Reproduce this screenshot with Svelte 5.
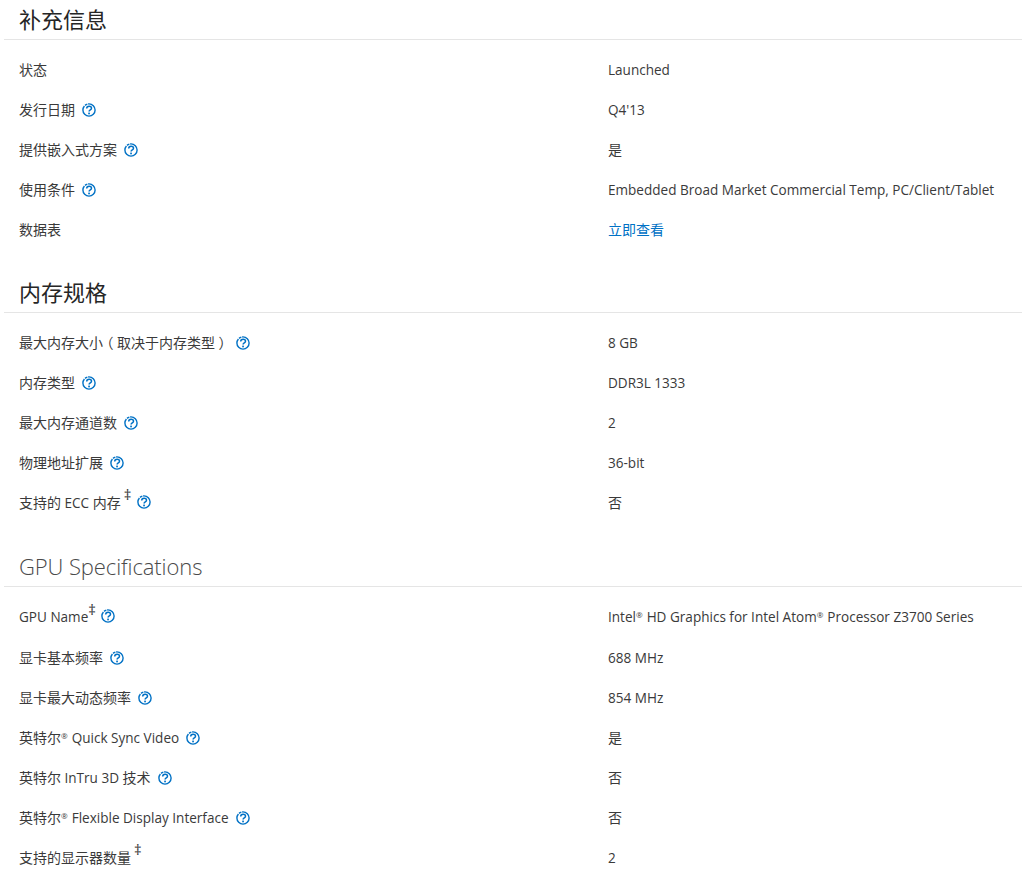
<script>
  const sections = [
    {
      title: '补充信息',
      rows: [
        { label: '状态', value: 'Launched' },
        { label: '发行日期', help: true, value: "Q4'13" },
        { label: '提供嵌入式方案', help: true, value: '是' },
        { label: '使用条件', help: true, value: 'Embedded Broad Market Commercial Temp, PC/Client/Tablet' },
        { label: '数据表', value: '立即查看', link: true }
      ]
    },
    {
      title: '内存规格',
      rows: [
        { label: '最大内存大小（取决于内存类型）', help: true, value: '8 GB' },
        { label: '内存类型', help: true, value: 'DDR3L 1333' },
        { label: '最大内存通道数', help: true, value: '2' },
        { label: '物理地址扩展', help: true, value: '36-bit' },
        { label: '支持的 ECC 内存', dagger: 'spaced', help: true, value: '否' }
      ]
    },
    {
      title: 'GPU Specifications',
      latin: true,
      rows: [
        { label: 'GPU Name', dagger: 'tight', help: true, value: 'Intel® HD Graphics for Intel Atom® Processor Z3700 Series' },
        { label: '显卡基本频率', help: true, value: '688 MHz' },
        { label: '显卡最大动态频率', help: true, value: '854 MHz' },
        { label: '英特尔® Quick Sync Video', help: true, value: '是' },
        { label: '英特尔 InTru 3D 技术', help: true, value: '否' },
        { label: '英特尔® Flexible Display Interface', help: true, value: '否' },
        { label: '支持的显示器数量', dagger: 'spaced', value: '2' }
      ]
    }
  ];

  // latin runs sit a bit smaller than the CJK ones, ® is a tiny raised mark
  function runs(text) {
    return text.split(/(®|[（）]|[\x20-\x7e]+)/).filter(Boolean).map((t) => ({
      t,
      cls: t === '®' ? 'reg' : /[（）]/.test(t) ? 'paren' : /^[\x20-\x7e]+$/.test(t) ? 'lat' : 'cjk'
    }));
  }
</script>

{#snippet text(str)}
  {#each runs(str) as r}<span class={r.cls}>{r.t}</span>{/each}
{/snippet}

<div class="page">
  {#each sections as section}
    <section>
      <h2 class:latin={section.latin}>{section.title}</h2>
      {#each section.rows as row}
        <div class="row" class:tall={row.dagger}>
          <div class="label">
            <span class="txt">{@render text(row.label)}</span>
            {#if row.dagger}
              <sup class={row.dagger}>‡</sup>
            {/if}
            {#if row.help}
              <svg class="help" viewBox="0 0 14 14" width="14" height="14" aria-hidden="true">
                <circle cx="7" cy="7" r="6.1" fill="none" stroke="#0071c5" stroke-width="1.4" stroke-dasharray="23 .8 2.5 .8 12" />
                <path d="M4.7 5.6c0-1.4 1-2.4 2.4-2.4s2.4.9 2.4 2.1c0 1.7-2.4 1.6-2.4 3.3" fill="none" stroke="#0071c5" stroke-width="1.5" />
                <rect x="6.2" y="9.6" width="1.7" height="1.7" fill="#0071c5" />
              </svg>
            {/if}
          </div>
          <div class="value">
            {#if row.link}
              <a href="#top">{row.value}</a>
            {:else}
              {@render text(row.value)}
            {/if}
          </div>
        </div>
      {/each}
    </section>
  {/each}
</div>

<style>
  :global(body) {
    margin: 0;
    background: #fff;
  }

  .page {
    padding-left: 4px;
    font-family: "Open Sans", "Noto Sans CJK SC", sans-serif;
    font-size: 14px;
    color: #3a3a3a;
  }

  section {
    padding-bottom: 23px;
  }

  section:last-child {
    padding-bottom: 0;
  }

  h2 {
    margin: 0 0 10px;
    padding: 0 0 4px 15px;
    height: 35px;
    line-height: 38px;
    font-size: 22px;
    font-weight: 400;
    color: #262626;
    border-bottom: 1px solid #e5e5e5;
  }

  h2.latin {
    font-weight: 300;
    letter-spacing: -0.1px;
    color: #4a4a4a;
  }

  .row {
    display: flex;
    box-sizing: border-box;
    height: 40px;
    padding-bottom: 2px;
    align-items: center;
  }

  .row.tall {
    height: 41px;
    padding-bottom: 3px;
  }

  .label {
    width: 604px;
    padding-left: 15px;
    box-sizing: border-box;
    display: flex;
    align-items: center;
    flex-shrink: 0;
  }

  .txt,
  .value {
    white-space: pre;
  }

  .lat {
    font-size: 13.55px;
  }

  .reg {
    font-size: 8px;
    vertical-align: 4px;
    margin-right: 0.5px;
  }

  /* half-width glyph with even padding, keeps the bracket centred in its cell */
  .paren {
    font-feature-settings: "halt";
    padding: 0 3.5px;
  }

  sup {
    width: 6px;
    font-size: 15px;
    line-height: 1;
    text-align: center;
    align-self: flex-start;
    margin-top: -5px;
  }

  sup.spaced {
    margin-left: 3px;
  }

  .help {
    margin: 2px 0 0 7px;
  }

  .tall .help {
    margin-top: 0;
  }

  a {
    color: #0071c5;
    text-decoration: none;
  }
</style>
